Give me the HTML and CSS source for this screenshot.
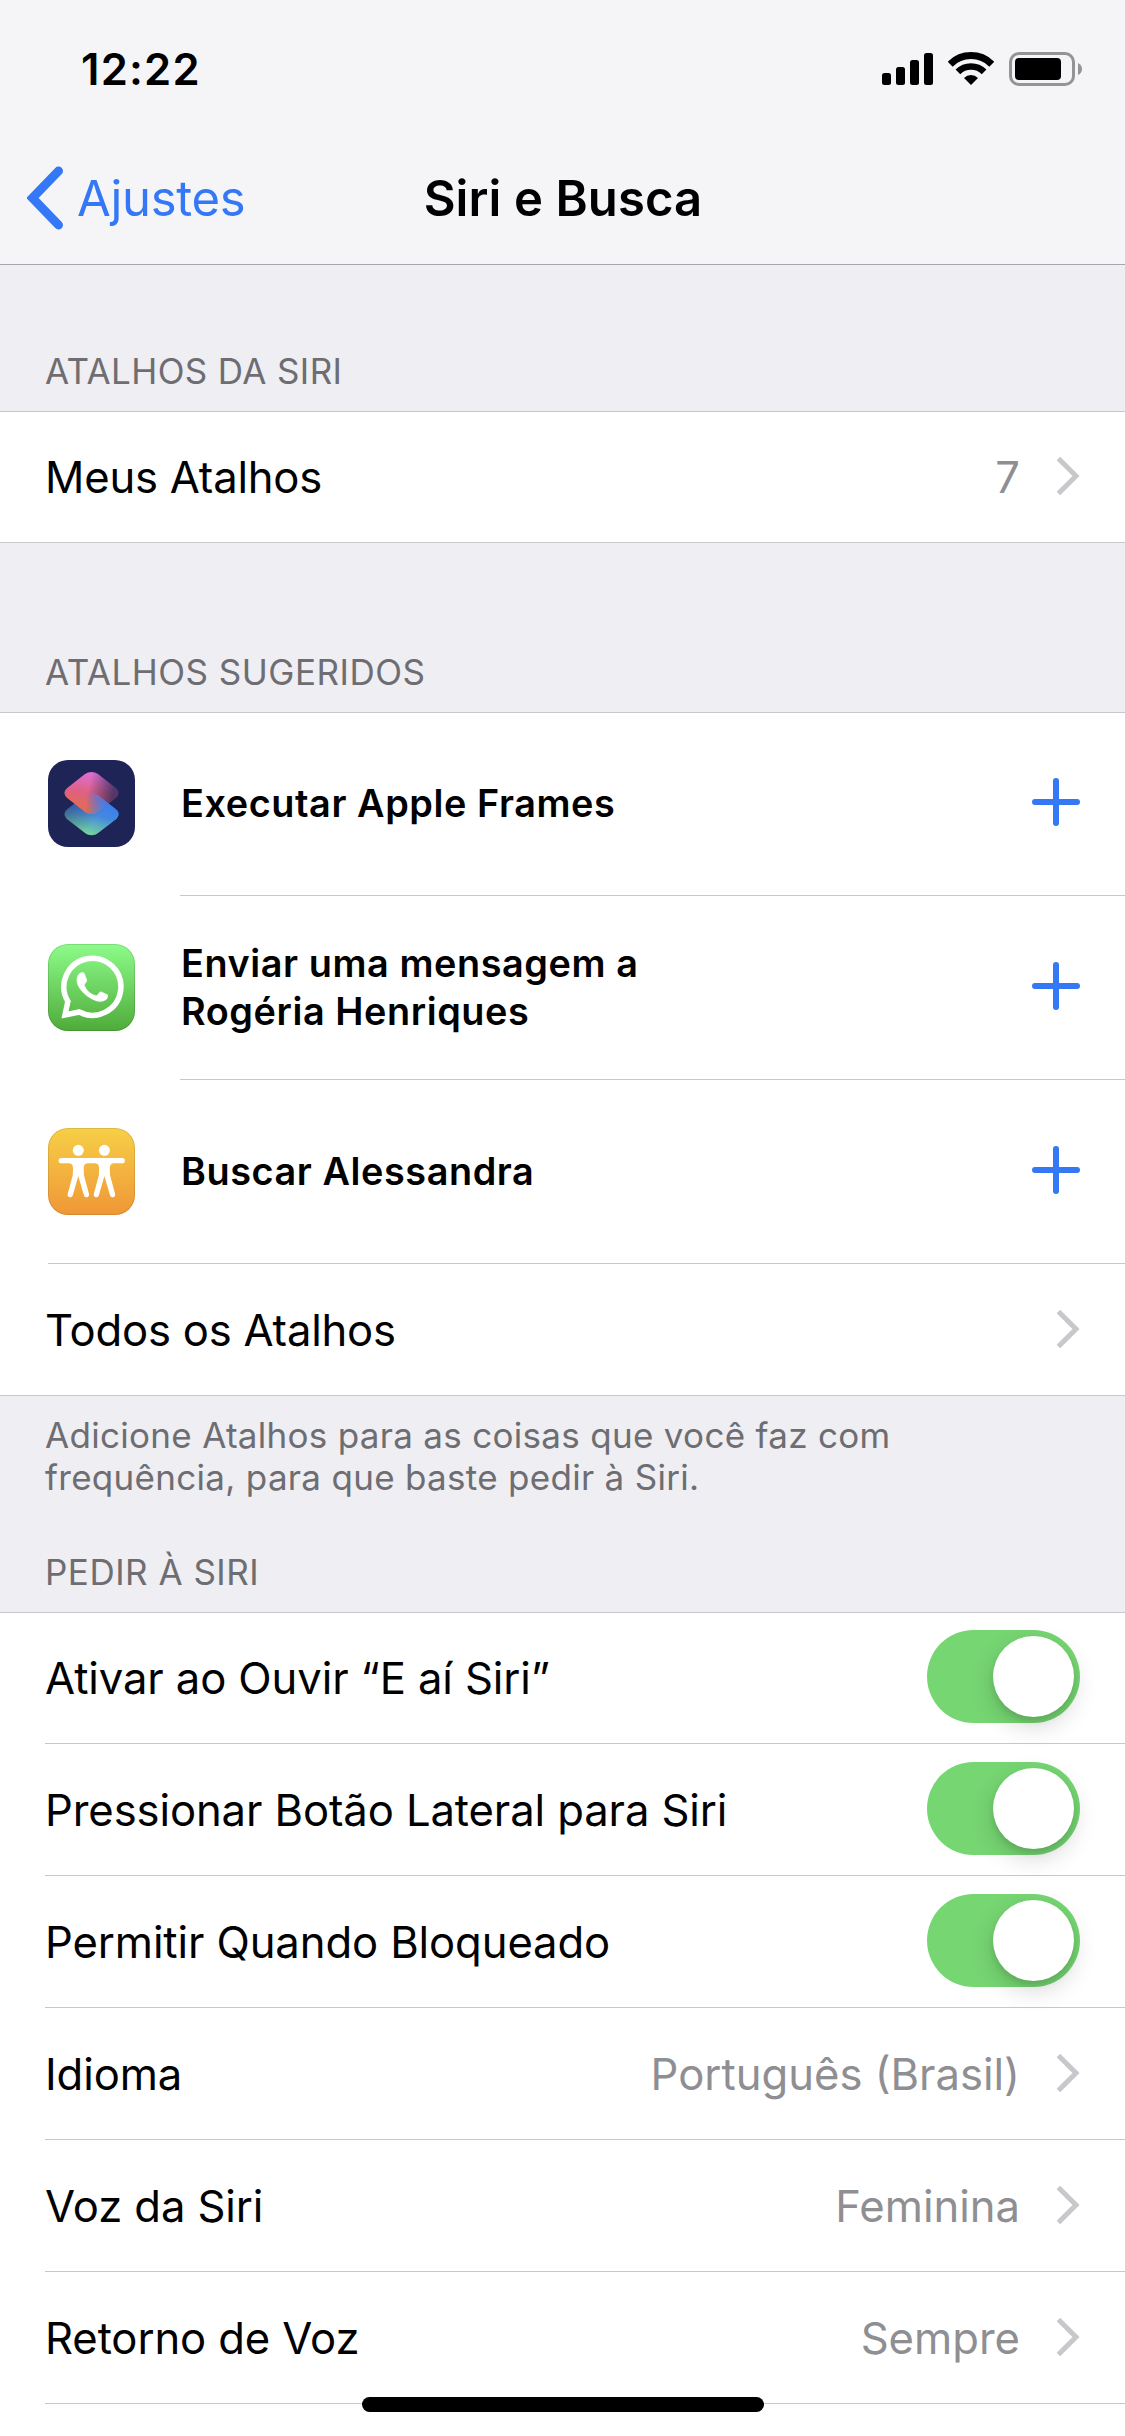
FILE: index.html
```
<!DOCTYPE html>
<html lang="pt-BR">
<head>
  <meta charset="utf-8">
  <title>Siri e Busca</title>
  <link rel="stylesheet" href="styles.css">
</head>
<body>
  <svg class="defs" width="0" height="0" aria-hidden="true">
    <symbol id="chevron" viewBox="0 0 24 40">
      <path d="M2.4 2.4 L20 20 L2.4 37.6" fill="none" stroke="#c7c7cc" stroke-width="5"/>
    </symbol>
    <symbol id="plus" viewBox="0 0 48 48">
      <path d="M24 3V45M3 24H45" fill="none" stroke="#3478f6" stroke-width="6" stroke-linecap="round"/>
    </symbol>
  </svg>

  <header class="top">
    <div class="status">
      <span class="time">12:22</span>
      <div class="indicators">
        <svg width="51" height="34" viewBox="0 0 51 34">
          <rect x="0" y="21" width="9" height="12" rx="2.5"/>
          <rect x="14" y="15" width="9" height="18" rx="2.5"/>
          <rect x="28" y="8" width="9" height="25" rx="2.5"/>
          <rect x="42" y="1" width="9" height="32" rx="2.5"/>
        </svg>
        <svg width="46" height="34" viewBox="0 0 46 34">
          <g fill="none" stroke="#000">
            <path d="M2.2 12.2A29.4 29.4 0 0 1 43.8 12.2" stroke-width="7"/>
            <path d="M9.9 19.9A18.5 18.5 0 0 1 36.1 19.9" stroke-width="6.6"/>
          </g>
          <path d="M16 26A9.9 9.9 0 0 1 30 26L23 33Z"/>
        </svg>
        <svg width="73" height="34" viewBox="0 0 73 34">
          <rect x="1.5" y="1.5" width="63" height="31" rx="8.5" fill="none" stroke="#949497" stroke-width="3"/>
          <rect x="6" y="6" width="46" height="22" rx="4"/>
          <path d="M69 11Q73 13 73 17T69 23Z" fill="#949497"/>
        </svg>
      </div>
    </div>
    <nav class="nav">
      <a class="back">
        <svg width="36" height="64" viewBox="0 0 36 64">
          <path d="M31.5 5L5.5 32L31.5 59" fill="none" stroke="#3478f6" stroke-width="9" stroke-linecap="round"/>
        </svg>
        <span>Ajustes</span>
      </a>
      <h1 class="title">Siri e Busca</h1>
    </nav>
  </header>

  <main>
    <section>
      <div class="caption caption-first"><h2 class="caption-short">ATALHOS DA SIRI</h2></div>
      <div class="group closed">
        <div class="row tight">
          <span class="label">Meus Atalhos</span>
          <span class="value">7</span>
          <svg class="chevron"><use href="#chevron"/></svg>
        </div>
      </div>
    </section>

    <section>
      <div class="caption caption-spaced"><h2>ATALHOS SUGERIDOS</h2></div>
      <div class="group closed">
        <div class="suggestion">
          <svg class="app" viewBox="0 0 87 87">
            <defs>
              <linearGradient id="warm" x1=".55" y1="0" x2=".35" y2="1">
                <stop offset="0" stop-color="#df6fd8"/><stop offset=".5" stop-color="#de6182"/><stop offset=".85" stop-color="#e56a54"/>
              </linearGradient>
              <linearGradient id="cool" x1=".75" y1=".2" x2=".4" y2="1">
                <stop offset="0" stop-color="#3a7cf2"/><stop offset=".4" stop-color="#4488e0"/><stop offset="1" stop-color="#7adb96"/>
              </linearGradient>
              <linearGradient id="fadeRight" x1="0" y1="0" x2="1" y2=".15">
                <stop offset=".5" stop-color="#fff"/><stop offset=".95" stop-color="#4a4a4a"/>
              </linearGradient>
              <linearGradient id="fadeLeft" x1="0" y1=".2" x2=".6" y2=".6">
                <stop offset="0" stop-color="#707070"/><stop offset="1" stop-color="#fff"/>
              </linearGradient>
              <linearGradient id="fadeOver" x1="0" y1="0" x2="1" y2="0">
                <stop offset=".4" stop-color="#000"/><stop offset=".85" stop-color="#fff"/>
              </linearGradient>
              <mask id="maskRight"><rect x="16" y="11" width="55" height="44" fill="url(#fadeRight)"/></mask>
              <mask id="maskLeft"><rect x="16" y="32" width="55" height="44" fill="url(#fadeLeft)"/></mask>
              <mask id="maskOver"><rect x="16" y="32" width="55" height="44" fill="url(#fadeOver)"/></mask>
              <path id="tile" d="M-6.5-18.9C-2.5-21.8 2.5-21.8 6.5-18.9L24-5.2C28-2 28 2 24 5.2L6.5 18.9C2.5 21.8-2.5 21.8-6.5 18.9L-24 5.2C-28 2-28-2-24-5.2Z"/>
            </defs>
            <rect width="87" height="87" rx="20" fill="#1f2456"/>
            <g mask="url(#maskLeft)"><use href="#tile" x="43.5" y="54.2" fill="url(#cool)"/></g>
            <g mask="url(#maskRight)"><use href="#tile" x="43.5" y="33" fill="url(#warm)"/></g>
            <g mask="url(#maskOver)"><use href="#tile" x="43.5" y="54.2" fill="url(#cool)"/></g>
          </svg>
          <div class="suggestion-body">
            <span class="suggestion-title">Executar Apple Frames</span>
            <svg class="plus"><use href="#plus"/></svg>
          </div>
        </div>
        <div class="suggestion">
          <svg class="app" viewBox="0 0 87 87">
            <defs>
              <linearGradient id="green" x1="0" y1="0" x2="0" y2="1">
                <stop offset="0" stop-color="#8dfc8a"/><stop offset="1" stop-color="#4fab3a"/>
              </linearGradient>
            </defs>
            <rect width="87" height="87" rx="20" fill="url(#green)"/>
            <rect x=".5" y=".5" width="86" height="86" rx="19.5" fill="none" stroke="#000" stroke-opacity=".12"/>
            <path d="M19.9 57.3A28.5 28.5 0 1 1 31.2 68L17 71Z" fill="none" stroke="#fff" stroke-width="5.5"/>
            <path d="M33 28.5C35 28 36.2 28.5 36.8 30L39 36C39.4 37.8 37 39.5 36.5 41C38 46 44 51 48.5 51.5C50 51 51.5 47.3 53 47.6L59.5 50.6C60.7 52 59.5 55 57.5 56.3C53 59 47 57.5 41 53.5C35 49.5 29 43 28.7 37C28.5 33 30 29.5 33 28.5Z" fill="#fff"/>
          </svg>
          <div class="suggestion-body">
            <span class="suggestion-title">Enviar uma mensagem a<br>Rogéria Henriques</span>
            <svg class="plus"><use href="#plus"/></svg>
          </div>
        </div>
        <div class="suggestion suggestion-last">
          <svg class="app" viewBox="0 0 87 87">
            <defs>
              <linearGradient id="amber" x1="0" y1="0" x2="0" y2="1">
                <stop offset="0" stop-color="#f7cf47"/><stop offset="1" stop-color="#ef9736"/>
              </linearGradient>
              <g id="person">
                <circle cx="30.3" cy="22.3" r="5.5"/>
                <path d="M21.5 35Q25 36 25 40L24.8 47L19.7 66A2.6 2.6 0 0 0 24.8 67.2L30.3 48L35.9 67.2A2.6 2.6 0 0 0 41 66L35.9 47L35.7 40Q35.7 36 39.2 35Z"/>
              </g>
            </defs>
            <rect width="87" height="87" rx="20" fill="url(#amber)"/>
            <rect x=".5" y=".5" width="86" height="86" rx="19.5" fill="none" stroke="#000" stroke-opacity=".1"/>
            <g fill="#fff">
              <rect x="10.6" y="30" width="66.2" height="5.3" rx="2.65"/>
              <use href="#person"/>
              <use href="#person" x="26.1"/>
            </g>
          </svg>
          <div class="suggestion-body">
            <span class="suggestion-title">Buscar Alessandra</span>
            <svg class="plus"><use href="#plus"/></svg>
          </div>
        </div>
        <div class="row tight">
          <span class="label">Todos os Atalhos</span>
          <svg class="chevron"><use href="#chevron"/></svg>
        </div>
      </div>
    </section>

    <section>
      <div class="caption caption-note">
        <p class="note">Adicione Atalhos para as coisas que você faz com<br>frequência, para que baste pedir à Siri.</p>
        <h2>PEDIR À SIRI</h2>
      </div>
      <div class="group">
        <div class="row">
          <span class="label">Ativar ao Ouvir “E aí Siri”</span>
          <span class="switch"><span class="knob"></span></span>
        </div>
        <div class="row">
          <span class="label">Pressionar Botão Lateral para Siri</span>
          <span class="switch"><span class="knob"></span></span>
        </div>
        <div class="row">
          <span class="label">Permitir Quando Bloqueado</span>
          <span class="switch"><span class="knob"></span></span>
        </div>
        <div class="row">
          <span class="label">Idioma</span>
          <span class="value">Português (Brasil)</span>
          <svg class="chevron"><use href="#chevron"/></svg>
        </div>
        <div class="row">
          <span class="label">Voz da Siri</span>
          <span class="value">Feminina</span>
          <svg class="chevron"><use href="#chevron"/></svg>
        </div>
        <div class="row">
          <span class="label">Retorno de Voz</span>
          <span class="value">Sempre</span>
          <svg class="chevron"><use href="#chevron"/></svg>
        </div>
      </div>
    </section>
  </main>
  <div class="home-indicator"></div>
</body>
</html>
```
FILE: styles.css
```
* {
  box-sizing: border-box;
}

body {
  margin: 0;
  width: 1125px;
  height: 2436px;
  overflow: hidden;
  background: #fff;
  color: #000;
  font-family: Inter, "Liberation Sans", sans-serif;
}

svg {
  display: block;
  flex: none;
}

.defs {
  position: absolute;
}

h1,
h2,
p {
  margin: 0;
  font-weight: 400;
}

/* Status bar and navigation */
.top {
  height: 265px;
  background: #f5f5f8;
  border-bottom: 1px solid #a7a7ab;
}

.status {
  display: flex;
  justify-content: space-between;
  align-items: center;
  height: 138px;
  padding: 0 43px 0 81px;
}

.time {
  font-size: 43.6px;
  font-weight: 600;
  letter-spacing: 1.2px;
}

.indicators {
  display: flex;
  gap: 15px;
}

.nav {
  display: grid;
  grid-template-columns: 1fr auto 1fr;
  align-items: center;
  height: 120px;
  padding: 0 27px;
}

.back {
  display: flex;
  align-items: center;
  gap: 14px;
  color: #3478f6;
  font-size: 49px;
  letter-spacing: -0.3px;
}

.title {
  padding-left: 1px;
  font-size: 49px;
  font-weight: 600;
  letter-spacing: 0.1px;
}

/* Text between groups */
.caption {
  display: flex;
  flex-direction: column;
  justify-content: flex-end;
  padding: 0 45px 19px 45px;
  background: #efeef3;
  color: #6d6d72;
  font-size: 35px;
  line-height: 42px;
}

.caption h2 {
  font-size: 35px;
  letter-spacing: 0.5px;
}

.caption .caption-short {
  letter-spacing: 0.38px;
}

.caption-first {
  height: 146px;
}

.caption-spaced {
  height: 169px;
}

.caption-note {
  height: 216px;
  justify-content: space-between;
  padding-top: 18px;
}

.note {
  letter-spacing: 0.3px;
}

/* Groups and rows */
.group {
  background: #fff;
  box-shadow: inset 0 1px #c8c7cc;
}

.closed {
  box-shadow: inset 0 1px #c8c7cc, inset 0 -1px #c8c7cc;
}

.row {
  display: flex;
  align-items: center;
  height: 132px;
  margin-left: 45px;
  padding-right: 45px;
  border-bottom: 1px solid #c8c7cc;
  font-size: 43.6px;
  letter-spacing: -0.1px;
}

.tight {
  letter-spacing: -0.2px;
}

.label {
  flex: 1;
  padding-top: 1px;
}

.value {
  padding-top: 1px;
  color: #8e8e93;
  letter-spacing: 0;
}

.chevron {
  width: 24px;
  height: 40px;
  margin: 0 0 2px 36px;
}

.switch {
  width: 153px;
  height: 93px;
  margin-bottom: 2px;
  padding: 6px;
  border-radius: 47px;
  background: #76d672;
}

.knob {
  display: block;
  width: 81px;
  height: 81px;
  margin-left: auto;
  border-radius: 50%;
  background: #fff;
  box-shadow: 0 9px 24px rgba(0, 0, 0, 0.16), 0 4px 6px rgba(0, 0, 0, 0.1);
}

/* Suggested shortcuts */
.suggestion {
  display: flex;
  height: 184px;
  padding-left: 48px;
}

.app {
  width: 87px;
  height: 87px;
  margin: 48px 45px 0 0;
}

.suggestion-body {
  display: flex;
  flex: 1;
  align-items: center;
  justify-content: space-between;
  padding-right: 45px;
  border-bottom: 1px solid #c8c7cc;
}

.suggestion-last {
  margin-left: 48px;
  padding-left: 0;
  border-bottom: 1px solid #c8c7cc;
}

.suggestion-last .suggestion-body {
  border-bottom: 0;
}

.suggestion-title {
  margin-bottom: 2px;
  padding-left: 1px;
  font-size: 37.8px;
  font-weight: 600;
  line-height: 48px;
  letter-spacing: 0.58px;
}

.plus {
  width: 48px;
  height: 48px;
  margin-bottom: 3px;
}

.home-indicator {
  position: absolute;
  left: 362px;
  top: 2397px;
  width: 402px;
  height: 15px;
  border-radius: 8px;
  background: #000;
}
```
